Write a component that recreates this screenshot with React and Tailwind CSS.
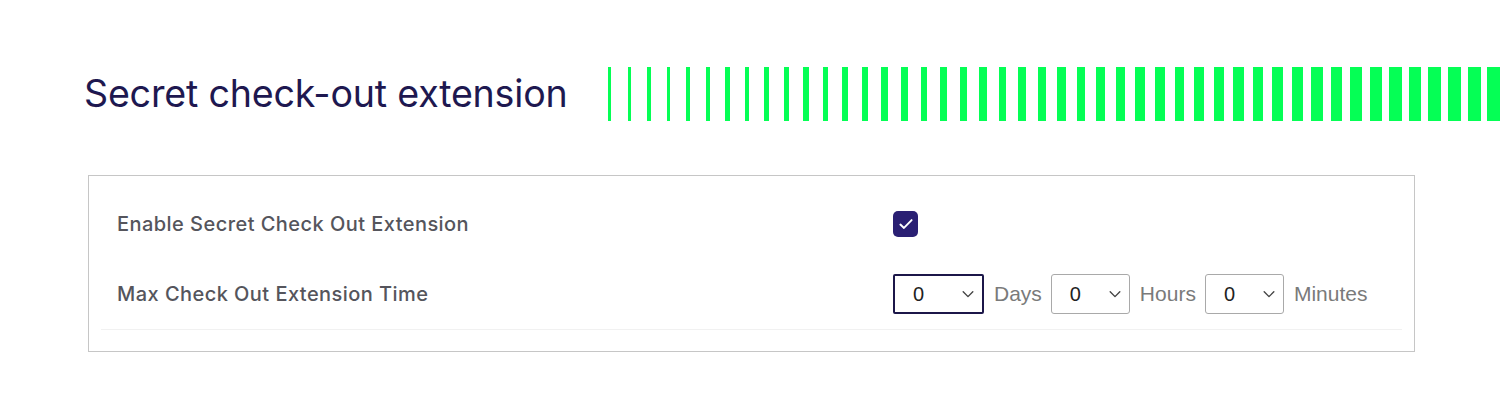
import React from 'react';

const BAR_COUNT = 46;
const PITCH = 19.55;

function Bars() {
  const bars = Array.from({ length: BAR_COUNT }, (_, i) => {
    const w = 3 + (i / (BAR_COUNT - 1)) * 10.5;
    return w;
  });
  return (
    <div className="flex-1 overflow-hidden h-[54px] flex">
      {bars.map((w, i) => (
        <div
          key={i}
          className="h-full bg-[#05ff55] shrink-0"
          style={{ width: `${w}px`, marginRight: `${PITCH - w}px` }}
        />
      ))}
    </div>
  );
}

function Chevron() {
  return (
    <svg className="w-[14px] h-[14px] text-[#444]" viewBox="0 0 16 16" fill="none" stroke="currentColor" strokeWidth={1.6} strokeLinecap="round" strokeLinejoin="round">
      <path d="M2.5 5.5l5.5 5.5 5.5-5.5" />
    </svg>
  );
}

function Select({ focused }) {
  return (
    <div
      className={
        'flex items-center justify-between bg-white h-[40px] pl-[18px] pr-[7px] shrink-0 ' +
        (focused
          ? 'w-[91px] border-2 border-[#1c1749] rounded-[2px]'
          : 'w-[79px] border-[1.5px] border-[#a9a9a9] rounded-[3px]')
      }
    >
      <span className="text-[20px] text-[#222] font-['Liberation_Sans',sans-serif]">0</span>
      <Chevron />
    </div>
  );
}

function Unit({ children }) {
  return (
    <span className="text-[21px] text-[#7a7a7a] font-['Liberation_Sans',sans-serif] pl-[10px] pr-[9px]">{children}</span>
  );
}

export default function App() {
  return (
    <div className="w-[1500px] h-[420px] bg-white font-['Inter',sans-serif] overflow-hidden">
      <div className="flex items-center pt-[67px] pl-[84px]">
        <h1 className="text-[37.6px] leading-[54px] text-[#1e1850] tracking-[-0.2px] w-[524px] shrink-0">
          Secret check-out extension
        </h1>
        <Bars />
      </div>

      <div className="ml-[88px] mt-[54px] w-[1327px] h-[177px] border border-[#c6c6c6] pt-[33px] px-[12px]">
        <div className="border-b border-[#f1f1f1] pb-[14px]">
          <div className="grid grid-cols-[776px_1fr] items-center h-[30px] pl-[16px]">
            <span className="text-[20px] font-medium tracking-[0.45px] text-[#55555c]">Enable Secret Check Out Extension</span>
            <div className="w-[25px] h-[26px] rounded-[5px] bg-[#2a1f73] flex items-center justify-center">
              <svg className="w-[18px] h-[18px]" viewBox="0 0 16 16" fill="none" stroke="white" strokeWidth={1.7} strokeLinecap="round" strokeLinejoin="round">
                <path d="M3 8.5l3.2 3L13 4.5" />
              </svg>
            </div>
          </div>
          <div className="grid grid-cols-[776px_1fr] items-center h-[42px] mt-[34px] pl-[16px]">
            <span className="text-[20px] font-medium tracking-[0.45px] text-[#55555c]">Max Check Out Extension Time</span>
            <div className="flex items-center">
              <Select focused />
              <Unit>Days</Unit>
              <Select />
              <Unit>Hours</Unit>
              <Select />
              <Unit>Minutes</Unit>
            </div>
          </div>
        </div>
      </div>
    </div>
  );
}
